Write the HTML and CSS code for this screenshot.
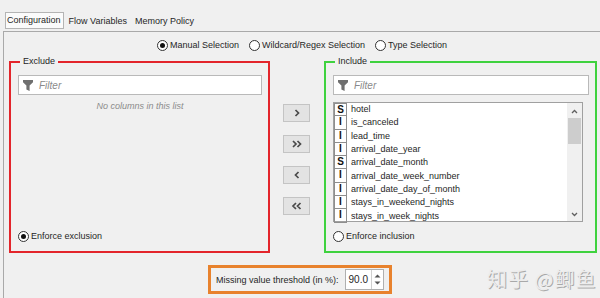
FILE: index.html
```html
<!DOCTYPE html>
<html lang="en">
<head>
    <meta charset="UTF-8">
    <title>Column Filter Configuration</title>
    <link rel="stylesheet" href="styles.css">
</head>
<body>
    <div class="tabs">
        <span class="tab active">Configuration</span>
        <span class="tab">Flow Variables</span>
        <span class="tab">Memory Policy</span>
    </div>

    <div class="panel">
        <div class="modes">
            <label class="opt"><span class="radio on"></span>Manual Selection</label>
            <label class="opt"><span class="radio"></span>Wildcard/Regex Selection</label>
            <label class="opt"><span class="radio"></span>Type Selection</label>
        </div>

        <div class="lists">
            <fieldset class="group exclude">
                <legend>Exclude</legend>
                <div class="filter">
                    <svg class="funnel" width="10" height="11" viewBox="0 0 10 11"><path d="M0 0H10V2.2L6.6 5.4V11L3.4 9.6V5.4L0 2.2Z" fill="#6f6f6f"/></svg>
                    <span>Filter</span>
                </div>
                <div class="empty">No columns in this list</div>
                <label class="opt enforce"><span class="radio on"></span>Enforce exclusion</label>
            </fieldset>

            <div class="moves">
                <button class="move"><svg width="10" height="10" viewBox="0 0 10 10"><path d="M3.5 2L6.5 5L3.5 8" /></svg></button>
                <button class="move"><svg width="12" height="10" viewBox="0 0 12 10"><path d="M2 2L5 5L2 8M6.5 2L9.5 5L6.5 8" /></svg></button>
                <button class="move"><svg width="10" height="10" viewBox="0 0 10 10"><path d="M6.5 2L3.5 5L6.5 8" /></svg></button>
                <button class="move"><svg width="12" height="10" viewBox="0 0 12 10"><path d="M5 2L2 5L5 8M9.5 2L6.5 5L9.5 8" /></svg></button>
            </div>

            <fieldset class="group include">
                <legend>Include</legend>
                <div class="filter">
                    <svg class="funnel" width="10" height="11" viewBox="0 0 10 11"><path d="M0 0H10V2.2L6.6 5.4V11L3.4 9.6V5.4L0 2.2Z" fill="#6f6f6f"/></svg>
                    <span>Filter</span>
                </div>
                <div class="columns">
                    <ul class="rows">
                        <li><b>S</b>hotel</li>
                        <li><b>I</b>is_canceled</li>
                        <li><b>I</b>lead_time</li>
                        <li><b>I</b>arrival_date_year</li>
                        <li><b>S</b>arrival_date_month</li>
                        <li><b>I</b>arrival_date_week_number</li>
                        <li><b>I</b>arrival_date_day_of_month</li>
                        <li><b>I</b>stays_in_weekend_nights</li>
                        <li><b>I</b>stays_in_week_nights</li>
                    </ul>
                    <div class="scrollbar">
                        <svg width="7" height="5" viewBox="0 0 7 5"><path d="M1 4L3.5 1.5L6 4"/></svg>
                        <div class="thumb"></div>
                        <div class="track"></div>
                        <svg width="7" height="5" viewBox="0 0 7 5"><path d="M1 1L3.5 3.5L6 1"/></svg>
                    </div>
                </div>
                <label class="opt enforce"><span class="radio"></span>Enforce inclusion</label>
            </fieldset>
        </div>

        <div class="threshold">
            <span>Missing value threshold (in %):</span>
            <div class="spinner">
                <span class="value">90.0</span>
                <span class="arrows">
                    <svg width="7" height="4" viewBox="0 0 7 4"><path d="M0.5 3.5L3.5 0.5L6.5 3.5Z"/></svg>
                    <svg width="7" height="4" viewBox="0 0 7 4"><path d="M0.5 0.5L3.5 3.5L6.5 0.5Z"/></svg>
                </span>
            </div>
        </div>

        <div class="watermark">知乎 @鲫鱼</div>
    </div>
</body>
</html>
```

FILE: styles.css
```css
html, body {
    margin: 0;
    height: 100%;
    overflow: hidden;
}
body {
    background: #f0f0f0;
    font-family: "Liberation Sans", Arial, sans-serif;
    font-size: 9px;
    color: #262626;
}
.tabs {
    display: flex;
    align-items: flex-end;
    gap: 2px;
    padding: 13px 0 0 5px;
    height: 18px;
    box-sizing: content-box;
}
.tab {
    height: 16px;
    line-height: 16px;
    padding: 0 3px;
    margin-bottom: 2px;
}
.tab.active {
    background: #fbfbfb;
    border: 1px solid #b4b4b4;
    height: 15px;
    line-height: 15px;
    padding: 0 2px 0 1px;
}
.panel {
    position: relative;
    margin-left: 3px;
    border-top: 1px solid #a9a9a9;
    border-left: 1px solid #a9a9a9;
    height: 266px;
    overflow: hidden;
}
.modes {
    display: flex;
    justify-content: center;
    gap: 10px;
    padding-top: 7px;
    height: 13px;
}
.opt {
    display: flex;
    align-items: center;
    gap: 2px;
    line-height: 13px;
}
.radio {
    width: 9px;
    height: 9px;
    border: 1px solid #333;
    border-radius: 50%;
    background: #fff;
    position: relative;
}
.radio.on::after {
    content: "";
    position: absolute;
    left: 2px;
    top: 2px;
    width: 5px;
    height: 5px;
    border-radius: 50%;
    background: #111;
}
.lists {
    display: flex;
    align-items: flex-start;
    margin-top: 4px;
}
.group {
    box-sizing: border-box;
    height: 197px;
    margin: 0;
    padding: 8px 6px 8px 7px;
    display: flex;
    flex-direction: column;
    min-width: 0;
}
.group legend {
    padding: 0 3px;
    margin-left: 2px;
    line-height: 11px;
}
.exclude {
    width: 261px;
    margin-left: 5px;
    border: 2px solid #e3252b;
}
.include {
    width: 273px;
    border: 2px solid #3fd23f;
}
.filter {
    display: flex;
    align-items: center;
    gap: 6px;
    height: 20px;
    box-sizing: border-box;
    border: 1px solid #b9b9b9;
    background: #fff;
    padding-left: 4px;
    color: #8a8a8a;
    font-style: italic;
    font-size: 10px;
}
.empty {
    flex: 1;
    text-align: center;
    color: #8c8c8c;
    font-style: italic;
    padding-top: 6px;
}
.moves {
    display: flex;
    flex-direction: column;
    gap: 13px;
    width: 27px;
    margin: 48px 14px 0 13px;
}
.move {
    height: 18px;
    width: 27px;
    padding: 0;
    border: 1px solid #c4c4c4;
    background: #e3e3e3;
    display: flex;
    align-items: center;
    justify-content: center;
}
.move path {
    fill: none;
    stroke: #4a4a4a;
    stroke-width: 1.7;
}
.columns {
    display: flex;
    width: 250px;
    height: 120px;
    box-sizing: border-box;
    margin: 7px 0 8px;
    border: 1px solid #a0a0a0;
    background: #fff;
}
.rows {
    list-style: none;
    margin: 0;
    padding: 0;
    flex: 1;
}
.rows li {
    display: flex;
    align-items: center;
    height: 13.3px;
    line-height: 13px;
}
.rows b {
    width: 11px;
    height: 12.3px;
    margin-right: 4px;
    border: 1px solid #8e8e8e;
    border-top: none;
    text-align: center;
    font-size: 10px;
    line-height: 12px;
    color: #111;
}
.rows li:first-child b {
    border-top: 1px solid #8e8e8e;
    height: 11.3px;
}
.scrollbar {
    width: 15px;
    background: #f0f0f0;
    display: flex;
    flex-direction: column;
    align-items: center;
    padding: 6px 0 4px;
    box-sizing: border-box;
}
.scrollbar path {
    fill: none;
    stroke: #606060;
    stroke-width: 1.3;
}
.thumb {
    width: 13px;
    height: 26px;
    margin-top: 4px;
    background: #cdcdcd;
}
.track {
    flex: 1;
}
.threshold {
    display: flex;
    align-items: center;
    gap: 6px;
    width: 184px;
    height: 29px;
    box-sizing: border-box;
    margin: 12px auto 0 204px;
    padding: 0 4px 0 5px;
    border: 3px solid #e8822d;
}
.spinner {
    display: flex;
    align-items: center;
    width: 39px;
    height: 21px;
    box-sizing: border-box;
    border: 1px solid #b0b0b0;
    background: #fff;
    padding-left: 3px;
    font-size: 10px;
}
.value {
    flex: 1;
}
.arrows {
    display: flex;
    flex-direction: column;
    gap: 3px;
    padding: 0 2px;
    border-left: 1px solid #d0d0d0;
    height: 100%;
    justify-content: center;
}
.arrows path {
    fill: #555;
}
.watermark {
    position: absolute;
    left: 483px;
    top: 232px;
    font-family: "Noto Sans CJK SC", sans-serif;
    font-size: 20px;
    letter-spacing: 1px;
    color: #ececec;
    text-shadow: 1px 1px 0 #a9a9a9;
}
```
